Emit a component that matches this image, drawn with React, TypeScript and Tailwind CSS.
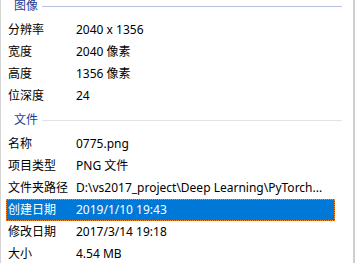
import React from 'react';

interface Row {
  label: string;
  value: string;
  selected?: boolean;
}

interface Group {
  title: string;
  lineClass: string;
  rows: Row[];
}

const groups: Group[] = [
  {
    title: '图像',
    lineClass: 'bg-[#b9bedc]',
    rows: [
      { label: '分辨率', value: '2040 x 1356' },
      { label: '宽度', value: '2040 像素' },
      { label: '高度', value: '1356 像素' },
      { label: '位深度', value: '24' },
    ],
  },
  {
    title: '文件',
    lineClass: 'bg-[#dfe3ea]',
    rows: [
      { label: '名称', value: '0775.png' },
      { label: '项目类型', value: 'PNG 文件' },
      { label: '文件夹路径', value: 'D:\\vs2017_project\\Deep Learning\\PyTorch...' },
      { label: '创建日期', value: '2019/1/10 19:43', selected: true },
      { label: '修改日期', value: '2017/3/14 19:18' },
      { label: '大小', value: '4.54 MB' },
    ],
  },
];

const font = { fontFamily: '"Segoe UI", "Noto Sans", "Noto Sans CJK SC", sans-serif' };

export default function App() {
  return (
    <div
      className="relative h-[263px] w-[355px] overflow-hidden bg-white text-[12px] text-black"
      style={font}
    >
      {/* left border and scrollbar edge */}
      <div className="absolute left-0 top-0 h-full w-px bg-[#d4d4d4]" />
      <div className="absolute right-0 top-0 h-full w-[2px] bg-[#cdcdcd]" />

      <div className="-mt-[7px] pr-[13px]">
        {groups.map(group => (
          <div key={group.title}>
            <div className="flex h-[26px] items-center pl-[14px]">
              <span className="text-[#1e3c96] leading-none">{group.title}</span>
              <div className={`ml-[4px] h-px flex-1 ${group.lineClass}`} />
            </div>
            {group.rows.map(row => (
              <div
                key={row.label}
                className={`ml-[6px] mr-[7px] flex h-[22px] items-center ${
                  row.selected
                    ? 'bg-[#0078d7] text-white outline-1 outline-dotted outline-[#ff8728] -outline-offset-1'
                    : ''
                }`}
              >
                <span className="w-[70px] shrink-0 pl-[2px] leading-none">{row.label}</span>
                <span className="whitespace-nowrap leading-none">{row.value}</span>
              </div>
            ))}
          </div>
        ))}
      </div>
    </div>
  );
}
